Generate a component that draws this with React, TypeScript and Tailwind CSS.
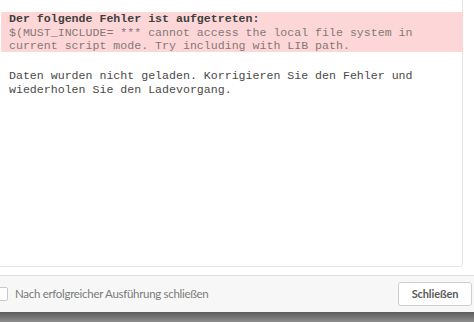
export default function App() {
  return (
    <div className="w-[474px] h-[322px] overflow-hidden flex flex-col bg-white">
      {/* Dialog body */}
      <div className="flex-1 min-h-0 flex flex-col bg-white pr-[11px] pb-[8px]">
        <div className="flex-1 -ml-[4px] -mt-[6px] border border-[#e6e6e6] rounded-[3px] pt-[17px] pl-[4px] font-['Liberation_Mono','Courier_New',monospace] text-[11.6px] leading-[13.6px]">
          <div className="bg-[#fdd7d7] pl-[8px] h-[40px] -mr-px">
            <div className="font-bold text-[#3f3f3f]">Der folgende Fehler ist aufgetreten:</div>
            <div className="text-[#857777]">
              $(MUST_INCLUDE= *** cannot access the local file system in
              <br />
              current script mode. Try including with LIB path.
            </div>
          </div>
          <div className="pl-[8px] mt-[17px] text-[#4a4a4a]">
            Daten wurden nicht geladen. Korrigieren Sie den Fehler und
            <br />
            wiederholen Sie den Ladevorgang.
          </div>
        </div>
      </div>

      {/* Footer */}
      <div className="h-[37px] shrink-0 border-t border-[#dedede] bg-[#f7f7f7] flex items-center justify-between font-['Lato',sans-serif]">
        <div className="flex items-center">
          <span className="-ml-[6px] w-[14px] h-[14px] border border-[#c8c8c8] rounded-[2px] bg-white" />
          <span className="ml-[7px] text-[11.5px] tracking-[-0.3px] text-[#7a7a7a]">Nach erfolgreicher Ausführung schließen</span>
        </div>
        <button className="mr-[2px] w-[74px] h-[24px] border border-[#cfcfcf] rounded-[3px] bg-white text-[11px] tracking-[-0.1px] font-bold text-[#5a5a5a]">
          Schließen
        </button>
      </div>

      {/* Overlay below */}
      <div className="h-[10px] shrink-0 bg-gradient-to-b from-[#5c5c5c] to-[#8e8e8e]" />
    </div>
  );
}
